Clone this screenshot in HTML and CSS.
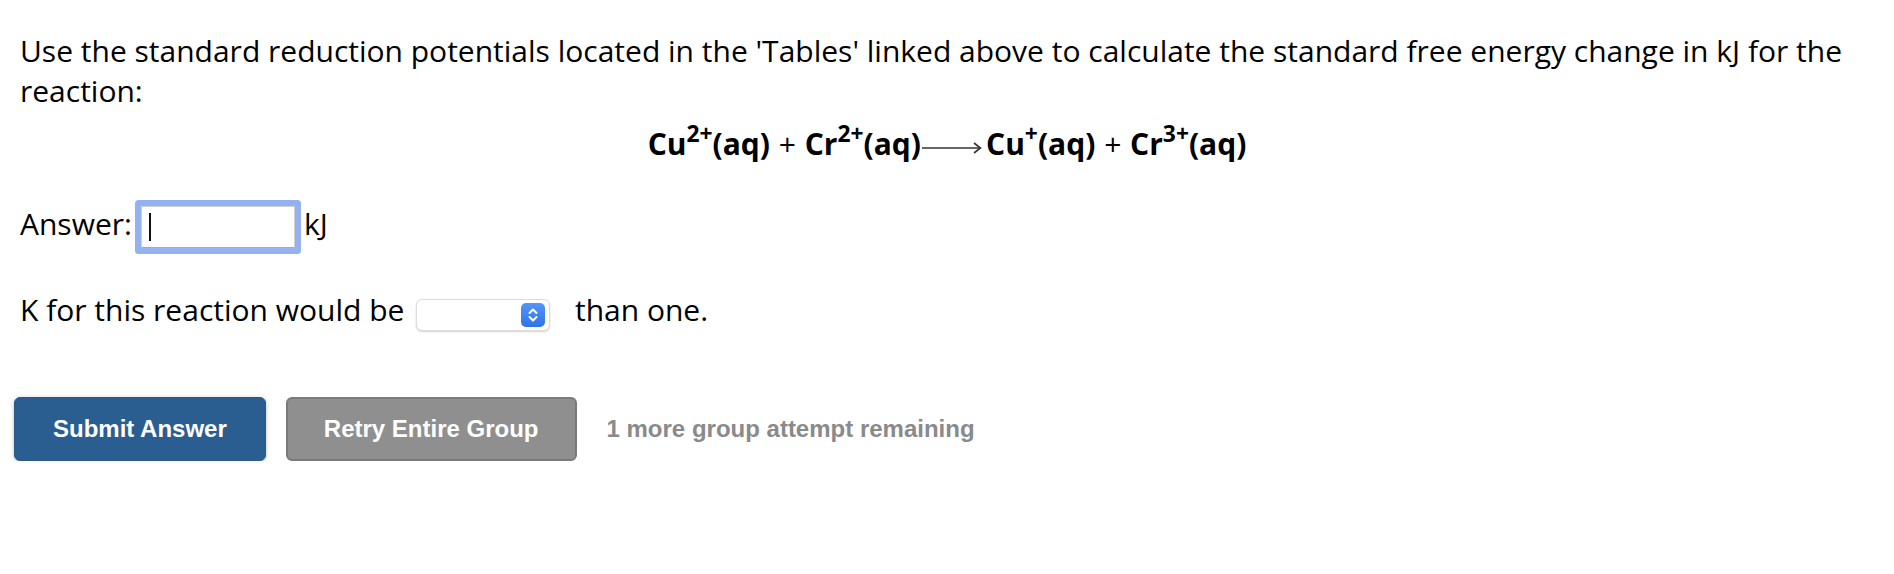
FILE: index.html
```html
<!DOCTYPE html>
<html lang="en">
  <head>
    <meta charset="UTF-8" />
    <title>Standard Free Energy Change</title>
    <link rel="stylesheet" href="styles.css">
  </head>
  <body>
    <div class="question">
      <p class="prompt">Use the standard reduction potentials located in the 'Tables' linked above to calculate the standard free energy change in kJ for the reaction:</p>

      <div class="equation">
        <span class="species">Cu<sup>2+</sup>(aq)</span>
        <span class="plus">+</span>
        <span class="species">Cr<sup>2+</sup>(aq)</span><svg class="arrow" width="60" height="16" viewBox="0 0 60 16">
          <line x1="0" y1="8" x2="58" y2="8" stroke="#333" stroke-width="1.6" />
          <polyline points="52,3 58.5,8 52,13" fill="none" stroke="#333" stroke-width="1.6" />
        </svg><span class="species">Cu<sup>+</sup>(aq)</span>
        <span class="plus">+</span>
        <span class="species">Cr<sup>3+</sup>(aq)</span>
      </div>

      <div class="answer-row">
        Answer:<input class="answer-input" type="text" aria-label="Answer">kJ
      </div>

      <div class="k-row">
        K for this reaction would be
        <span class="select-box">
          <span class="stepper">
            <svg width="24" height="24" viewBox="0 0 24 24">
              <polyline points="8.5,10 12,6.5 15.5,10" fill="none" stroke="#fff" stroke-width="2" stroke-linecap="round" stroke-linejoin="round" />
              <polyline points="8.5,14 12,17.5 15.5,14" fill="none" stroke="#fff" stroke-width="2" stroke-linecap="round" stroke-linejoin="round" />
            </svg>
          </span>
        </span>
        than one.
      </div>

      <div class="actions">
        <button class="btn submit">Submit Answer</button>
        <button class="btn retry">Retry Entire Group</button>
        <span class="remaining">1 more group attempt remaining</span>
      </div>
    </div>
  </body>
</html>
```

FILE: styles.css
```css
body {
  margin: 0;
  background-color: #fff;
  font-family: "Open Sans", "Noto Sans", sans-serif;
  color: #000;
}

.question {
  padding: 31px 20px 0 20px;
}

.prompt {
  margin: 0;
  font-size: 30px;
  line-height: 40px;
}

.equation {
  margin-top: 13px;
  text-align: center;
  font-size: 30px;
  font-weight: bold;
  line-height: 40px;
}

.equation sup {
  font-size: 0.76em;
  line-height: 0;
  vertical-align: 0.55em;
}

.equation .plus {
  font-weight: normal;
  margin: 0 1px;
}

.arrow {
  vertical-align: -1px;
  margin: 0 4px 0 1px;
}

.answer-row {
  margin-top: 40px;
  font-size: 30px;
  line-height: 40px;
}

.answer-input {
  box-sizing: border-box;
  width: 154px;
  height: 42px;
  margin: 0 9px 0 9px;
  padding: 0;
  vertical-align: middle;
  border: 1px solid #d0d0d0;
  border-bottom-color: #aaa;
  border-radius: 1px;
  box-shadow: 0 0 0 6px #94b2f1;
  outline: none;
  background: linear-gradient(#111, #111) no-repeat 7px 6px / 2px 28px, #fff;
}

.k-row {
  margin-top: 42px;
  font-size: 30px;
  line-height: 40px;
}

.select-box {
  box-sizing: border-box;
  display: inline-flex;
  justify-content: flex-end;
  align-items: center;
  width: 134px;
  height: 32px;
  margin: 0 17px 0 4px;
  padding-right: 4px;
  vertical-align: -6px;
  background-color: #fff;
  border: 1px solid #dcdcdc;
  border-radius: 6px;
  box-shadow: 0 1px 2px rgba(0, 0, 0, 0.18);
}

.stepper {
  display: flex;
  width: 24px;
  height: 24px;
  border-radius: 5px;
  background: linear-gradient(#5595f8, #2f73ea);
}

.actions {
  display: flex;
  align-items: center;
  margin-top: 66px;
  margin-left: -6px;
}

.btn {
  height: 64px;
  padding: 0 38px;
  font-family: "Liberation Sans", Arial, sans-serif;
  font-size: 24px;
  font-weight: bold;
  color: #fff;
  border-radius: 6px;
  cursor: pointer;
}

.submit {
  background-color: #2a5e90;
  border: 1px solid #285a8a;
  box-shadow: 0 1px 4px rgba(0, 0, 0, 0.25);
}

.retry {
  margin-left: 20px;
  padding: 0 36px;
  background-color: #8f8f8f;
  border: 2px solid #7a7a7a;
}

.remaining {
  margin-left: 30px;
  font-family: "Liberation Sans", Arial, sans-serif;
  font-size: 24px;
  font-weight: bold;
  color: #8a8a8a;
}
```
